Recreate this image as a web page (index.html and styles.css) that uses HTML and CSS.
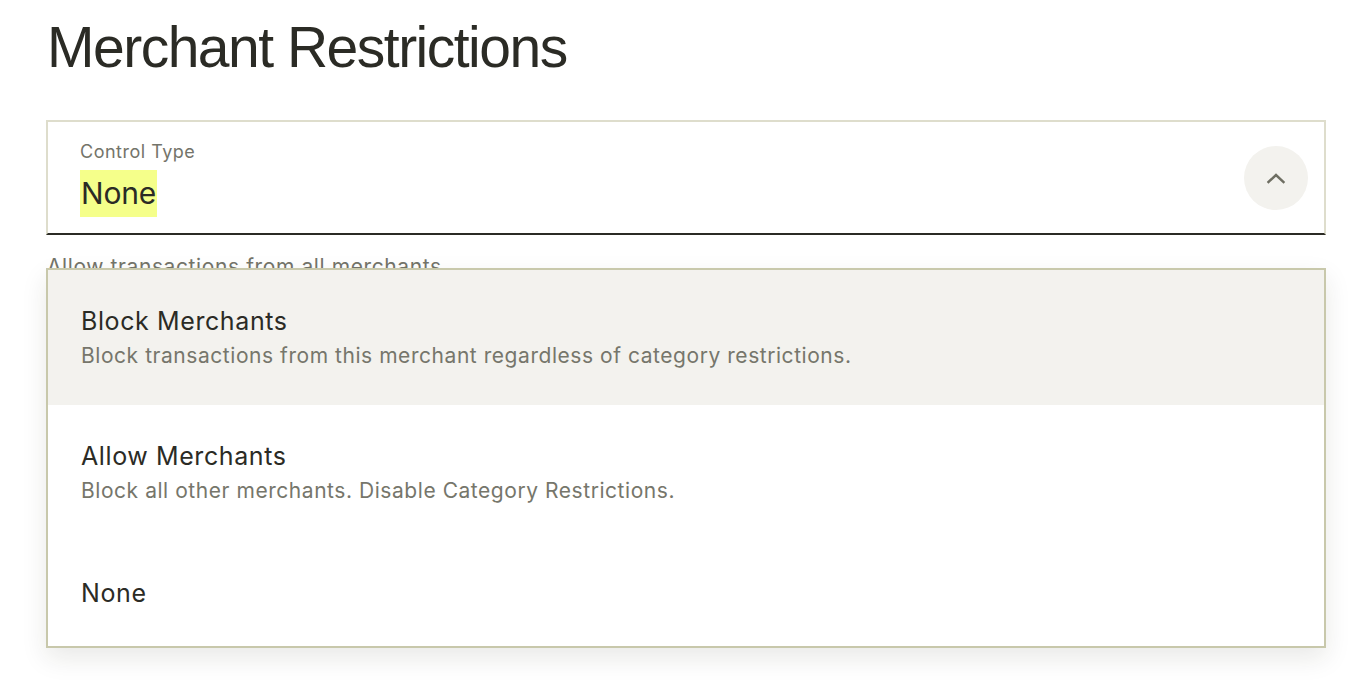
FILE: index.html
```html
<!DOCTYPE html>
<html lang="en">
<head>
<meta charset="utf-8">
<title>Merchant Restrictions</title>
<link rel="stylesheet" href="styles.css">
</head>
<body>
<main class="page">
  <h1 class="title">Merchant Restrictions</h1>
  <div class="field-wrap">
    <div class="field">
      <div class="field-text">
        <div class="field-label">Control Type</div>
        <div class="field-value"><span class="highlight">None</span></div>
      </div>
      <button class="chev-btn" type="button" aria-label="Collapse">
        <svg width="20" height="12" viewBox="0 0 20 12" fill="none">
          <path d="M2.5 10 L10 3 L17.5 10" stroke="#6e6e62" stroke-width="2.4" stroke-linecap="square" stroke-linejoin="miter"/>
        </svg>
      </button>
    </div>
    <div class="helper">Allow transactions from all merchants</div>
    <ul class="menu">
      <li class="option active">
        <div class="opt-title">Block Merchants</div>
        <div class="opt-desc">Block transactions from this merchant regardless of category restrictions.</div>
      </li>
      <li class="option">
        <div class="opt-title">Allow Merchants</div>
        <div class="opt-desc">Block all other merchants. Disable Category Restrictions.</div>
      </li>
      <li class="option option-single">
        <div class="opt-title">None</div>
      </li>
    </ul>
  </div>
</main>
</body>
</html>
```

FILE: styles.css
```css
* { box-sizing: border-box; }
html, body { margin: 0; padding: 0; background: #ffffff; min-height: 690px; }
body {
  font-family: Inter, "Liberation Sans", Arial, sans-serif;
  color: #2b2b25;
}
.page {
  padding: 14px 26px 0 46px;
  min-height: 690px;
}
.title {
  margin: 0 0 0 1px;
  font-family: "Liberation Sans", Arial, sans-serif;
  font-weight: 400;
  font-size: 57px;
  line-height: 66px;
  letter-spacing: -1.5px;
  color: #2b2b25;
  height: 106px;
}
.field-wrap {
  position: relative;
  min-height: 540px;
}
.field {
  display: flex;
  align-items: center;
  justify-content: space-between;
  height: 115px;
  border: 2px solid #deddcc;
  border-bottom: 2px solid #2b2b25;
  padding: 0 16px 0 32px;
  background: #fff;
}
.field-text {
  display: flex;
  flex-direction: column;
  padding-top: 2px;
}
.field-label {
  font-size: 18px;
  line-height: 24px;
  color: #74746a;
  letter-spacing: 0.5px;
}
.field-value {
  margin-top: 6px;
  height: 47px;
}
.highlight {
  display: inline-block;
  background: #f5ff8a;
  font-size: 30px;
  line-height: 47px;
  padding: 0 1px;
  letter-spacing: -0.2px;
  color: #2b2b25;
}
.chev-btn {
  width: 64px;
  height: 64px;
  border-radius: 50%;
  border: none;
  background: #f3f2ee;
  display: flex;
  align-items: center;
  justify-content: center;
  padding: 0;
  margin-top: 0;
}
.helper {
  margin-top: 18px;
  font-size: 21px;
  line-height: 28px;
  color: #74746a;
  letter-spacing: 0.6px;
  padding-left: 1px;
}
.menu {
  position: absolute;
  top: 148px;
  left: 0;
  right: 0;
  margin: 0;
  padding: 0;
  list-style: none;
  background: #fff;
  border: 2px solid #c8c8ab;
  box-shadow: 0 10px 24px rgba(40, 40, 20, 0.10);
}
.option {
  padding: 37px 32px 34px 33px;
}
.option-single {
  padding-top: 39px;
  padding-bottom: 39px;
}
.option.active {
  background: #f3f2ee;
}
.opt-title {
  font-size: 25px;
  line-height: 28px;
  color: #2b2b25;
  letter-spacing: 0.6px;
}
.opt-desc {
  margin-top: 6px;
  font-size: 21px;
  line-height: 30px;
  color: #76766b;
  letter-spacing: 0.55px;
}
```
